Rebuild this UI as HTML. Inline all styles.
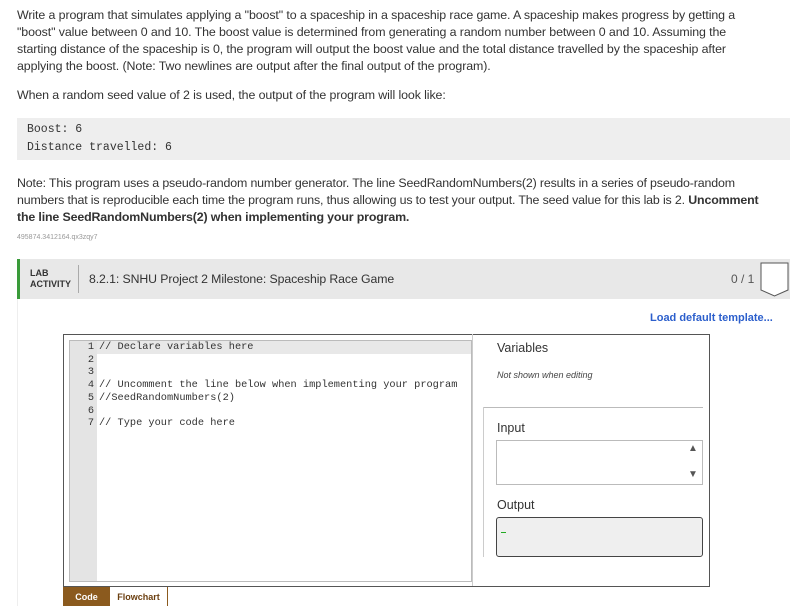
<!DOCTYPE html>
<html><head><style>
body{margin:0;width:790px;height:606px;overflow:hidden;background:#fff;font-family:"Liberation Sans",sans-serif;color:#333;position:relative}
.a{position:absolute}
p{margin:0}
.t{font-size:12.4px;line-height:17px;left:17px;letter-spacing:-0.1px}
.mono{font-family:"Liberation Mono",monospace}
</style></head><body>
<div class="a t" style="top:7px;width:746px">Write a program that simulates applying a "boost" to a spaceship in a spaceship race game. A spaceship makes progress by getting a "boost" value between 0 and 10. The boost value is determined from generating a random number between 0 and 10. Assuming the starting distance of the spaceship is 0, the program will output the boost value and the total distance travelled by the spaceship after applying the boost. (Note: Two newlines are output after the final output of the program).</div>
<div class="a t" style="top:87px;width:760px">When a random seed value of 2 is used, the output of the program will look like:</div>
<div class="a mono" style="left:17px;top:118px;width:773px;height:42px;background:#eee;font-size:11.5px;line-height:18px;padding:3px 0 0 10px;box-sizing:border-box;color:#333">Boost: 6<br>Distance travelled: 6</div>
<div class="a t" style="top:175px;width:773px;letter-spacing:-0.15px">Note: This program uses a pseudo-random number generator. The line SeedRandomNumbers(2) results in a series of pseudo-random<br>numbers that is reproducible each time the program runs, thus allowing us to test your output. The seed value for this lab is 2. <b>Uncomment<br>the line SeedRandomNumbers(2) when implementing your program.</b></div>
<div class="a" style="left:17px;top:234px;font-size:7px;color:#999">495874.3412164.qx3zqy7</div>
<div class="a" style="left:17px;top:259px;width:773px;height:40px;background:#e8e8e8;border-left:3px solid #3a9b3a;box-sizing:border-box"></div>
<div class="a" style="left:30px;top:268px;font-size:9px;line-height:11px;font-weight:bold;color:#333">LAB<br>ACTIVITY</div>
<div class="a" style="left:78px;top:265px;width:1px;height:28px;background:#aaa"></div>
<div class="a" style="left:89px;top:272px;font-size:12.3px;letter-spacing:-0.1px">8.2.1: SNHU Project 2 Milestone: Spaceship Race Game</div>
<div class="a" style="left:731px;top:272px;font-size:12px;color:#555">0 / 1</div>
<svg class="a" style="left:760px;top:262px" width="30" height="36"><path d="M1 1 H28 V28 L14.5 34 L1 28 Z" fill="#fff" stroke="#555" stroke-width="1"/></svg>
<div class="a" style="left:17px;top:299px;width:1px;height:307px;background:#eee"></div>
<div class="a" style="left:650px;top:312px;font-size:11px;font-weight:bold;color:#2c5fcc">Load default template...</div>
<div class="a" style="left:63px;top:334px;width:647px;height:253px;border:1px solid #555;box-sizing:border-box"></div>
<div class="a" style="left:69px;top:340px;width:403px;height:242px;border:1px solid #bbb;box-sizing:border-box;background:#fff"></div>
<div class="a" style="left:70px;top:341px;width:27px;height:240px;background:#e4e4e4"></div>
<div class="a" style="left:97px;top:341px;width:374px;height:13px;background:#e8e8e8"></div>
<div class="a mono" style="left:70px;top:341px;width:24px;text-align:right;font-size:10.3px;line-height:12.7px;color:#333">1<br>2<br>3<br>4<br>5<br>6<br>7</div>
<div class="a mono" style="left:99px;top:341px;font-size:10.3px;line-height:12.7px;color:#333;white-space:pre">// Declare variables here


// Uncomment the line below when implementing your program
//SeedRandomNumbers(2)

// Type your code here</div>
<div class="a" style="left:472px;top:334px;width:1px;height:252px;background:#ccc"></div>
<div class="a" style="left:497px;top:341px;font-size:12.5px">Variables</div>
<div class="a" style="left:497px;top:370px;font-size:9px;font-style:italic;color:#444">Not shown when editing</div>
<div class="a" style="left:483px;top:407px;width:220px;height:1px;background:#bbb"></div>
<div class="a" style="left:483px;top:407px;width:1px;height:150px;background:#ccc"></div>
<div class="a" style="left:497px;top:421px;font-size:12.5px">Input</div>
<div class="a" style="left:496px;top:440px;width:207px;height:45px;border:1px solid #bbb;box-sizing:border-box"></div>
<div class="a" style="left:688px;top:443px;font-size:10px;color:#555">▲</div>
<div class="a" style="left:688px;top:469px;font-size:10px;color:#555">▼</div>
<div class="a" style="left:497px;top:498px;font-size:12.5px">Output</div>
<div class="a" style="left:496px;top:517px;width:207px;height:40px;border:1px solid #444;border-radius:3px;background:#efefef;box-sizing:border-box"></div>
<div class="a" style="left:501px;top:532px;width:5px;height:1px;background:#2a2"></div>
<div class="a" style="left:63px;top:587px;width:47px;height:19px;background:#8b5a1e;color:#fff;font-size:9px;font-weight:bold;text-align:center;line-height:20px">Code</div>
<div class="a" style="left:110px;top:587px;width:58px;height:19px;border-right:1px solid #8b5a1e;box-sizing:border-box;color:#6b3f10;font-size:9px;font-weight:bold;text-align:center;line-height:20px">Flowchart</div>
</body></html>
